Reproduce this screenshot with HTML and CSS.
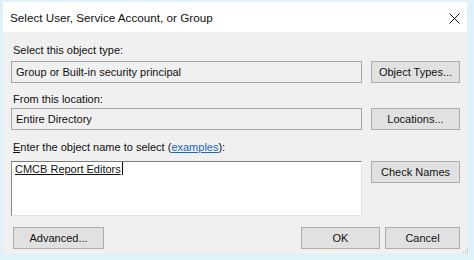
FILE: index.html
```html
<!DOCTYPE html>
<html lang="en">
<head>
  <meta charset="UTF-8" />
  <title>Select User, Service Account, or Group</title>
  <link rel="stylesheet" href="styles.css">
</head>
<body>
  <div class="window">
    <div class="titlebar">
      <span class="title">Select User, Service Account, or Group</span>
      <svg class="close" width="11" height="11" viewBox="0 0 11 11">
        <path d="M0.5 0.5 L10.5 10.5 M10.5 0.5 L0.5 10.5" stroke="#111" stroke-width="1" fill="none" />
      </svg>
    </div>
    <div class="content">
      <div class="label">Select this object type:</div>
      <div class="row row-first">
        <div class="field">Group or Built-in security principal</div>
        <button class="btn">Object Types...</button>
      </div>
      <div class="label label-second">From this location:</div>
      <div class="row row-second">
        <div class="field">Entire Directory</div>
        <button class="btn">Locations...</button>
      </div>
      <div class="label label-third"><u>E</u>nter the object name to select (<a href="#">examples</a>):</div>
      <div class="row row-third">
        <div class="names"><span class="resolved">CMCB Report Editors</span><span class="caret"></span></div>
        <button class="btn">Check Names</button>
      </div>
      <div class="actions">
        <button class="btn btn-advanced">Advanced...</button>
        <button class="btn btn-ok">OK</button>
        <button class="btn btn-cancel">Cancel</button>
      </div>
    </div>
    <!-- resize grip -->
    <svg class="grip" width="7" height="7" viewBox="0 0 7 7">
      <rect x="5" y="1" width="1" height="1" fill="#b8b8b8" />
      <rect x="3" y="3" width="1" height="1" fill="#b8b8b8" />
      <rect x="5" y="3" width="1" height="1" fill="#b8b8b8" />
      <rect x="1" y="5" width="1" height="1" fill="#b8b8b8" />
      <rect x="3" y="5" width="1" height="1" fill="#b8b8b8" />
      <rect x="5" y="5" width="1" height="1" fill="#b8b8b8" />
    </svg>
  </div>
</body>
</html>
```

FILE: styles.css
```css
body {
  margin: 0;
  background-color: #dff2fa;
  font-family: "Liberation Sans", Arial, sans-serif;
  font-size: 11px;
  color: #000;
}

.window {
  position: relative;
  margin: 2px 7px 0 3px;
  height: 252px;
  background-color: #f0f0f0;
}

.titlebar {
  height: 30px;
  background-color: #fff;
  display: flex;
  align-items: center;
  justify-content: space-between;
  padding: 0 7px;
}

.title {
  font-size: 11.7px;
  color: #111;
}

.close {
  display: block;
  margin-top: 2px;
}

.content {
  padding: 11px 7px 0 8px;
}

.label {
  line-height: 14px;
  padding-left: 2px;
  color: #111;
}

.label a {
  color: #1a66c7;
  text-decoration: underline;
}

.label-second {
  margin-top: 9px;
}

.label-third {
  margin-top: 10px;
}

.row {
  display: flex;
  align-items: flex-start;
  gap: 9px;
}

.row-first {
  margin-top: 4px;
}

.row-second {
  margin-top: 2px;
}

.row-third {
  margin-top: 7px;
}

.field {
  flex: 1;
  box-sizing: border-box;
  height: 22px;
  border: 1px solid #a6a6a6;
  padding-left: 4px;
  line-height: 20px;
  color: #111;
}

.names {
  flex: 1;
  box-sizing: border-box;
  height: 55px;
  background-color: #fff;
  border: 1px solid;
  border-color: #7d7d7d #e2e2e2 #e2e2e2 #8a8a8a;
  padding: 0 3px;
  line-height: 14px;
  color: #111;
}

.resolved {
  text-decoration: underline;
}

.caret {
  display: inline-block;
  width: 1px;
  height: 13px;
  margin-left: 1px;
  background-color: #000;
  vertical-align: -2px;
}

.btn {
  box-sizing: border-box;
  width: 89px;
  height: 22px;
  padding: 0;
  background-color: #e1e1e1;
  border: 1px solid #adadad;
  font-family: inherit;
  font-size: 11px;
  color: #111;
}

.actions {
  display: flex;
  gap: 5px;
  margin-top: 11px;
}

.btn-advanced {
  width: 91px;
  margin-left: 2px;
  margin-right: auto;
}

.btn-ok {
  width: 79px;
}

.btn-cancel {
  width: 75px;
}

.grip {
  position: absolute;
  right: -2px;
  bottom: 0;
}
```
